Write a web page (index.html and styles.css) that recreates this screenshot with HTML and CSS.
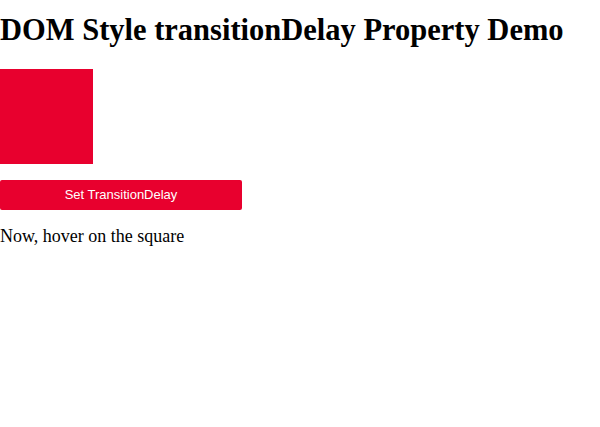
FILE: index.html
```html
<!DOCTYPE html>
<html>
<head>
<meta charset="utf-8">
<link rel="stylesheet" href="styles.css">
</head>
<body>
<h1 class="title">DOM Style transitionDelay Property Demo</h1>
<div class="square"></div>
<button class="btn">Set TransitionDelay</button>
<p class="note">Now, hover on the square</p>
</body>
</html>
```
FILE: styles.css
```css
body {
  margin: 0;
  font-family: "Liberation Serif", "Times New Roman", serif;
  color: #000;
  background: #fff;
}
.title {
  font-size: 30.5px;
  font-weight: bold;
  margin: 13px 0 0;
  line-height: 34px;
}
.square {
  width: 93px;
  height: 95px;
  background: #e8002e;
  margin-top: 22px;
}
.btn {
  display: block;
  width: 242px;
  height: 30px;
  margin-top: 16px;
  background: #e8002e;
  color: #fff;
  border: none;
  border-radius: 2px;
  font-family: "Liberation Sans", Arial, sans-serif;
  font-size: 13px;
  padding: 0 0 2px;
}
.note {
  font-size: 18px;
  margin: 15px 0 0;
  line-height: 22px;
}
```
